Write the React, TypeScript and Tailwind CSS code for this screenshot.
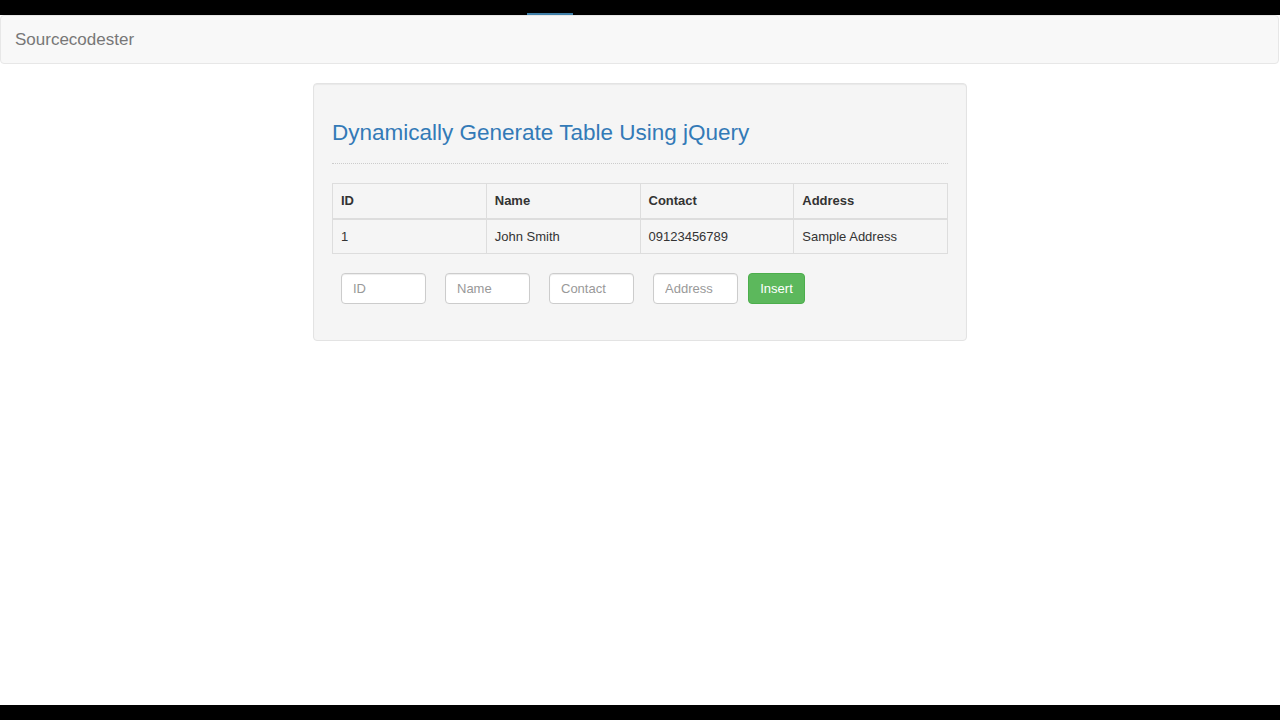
export default function App() {
  const rows = [{ id: "1", name: "John Smith", contact: "09123456789", address: "Sample Address" }];
  const inputs = ["ID", "Name", "Contact", "Address"];

  return (
    <div className="flex min-h-[720px] flex-col bg-white font-['Liberation_Sans',Arial,sans-serif] text-[13px] text-[#333]">
      <div className="relative h-[15px] bg-black">
        <div className="absolute left-[527px] bottom-0 h-[2px] w-[46px] bg-[#3f7fa8]" />
      </div>

      <nav className="mr-[1px] flex h-[49px] items-center rounded-[4px] border border-[#e7e7e7] bg-[#f8f8f8] px-[14px]">
        <span className="text-[17px] text-[#777]">Sourcecodester</span>
      </nav>

      <main className="flex-1">
        <div className="mx-auto mt-[19px] w-[654px] rounded-[4px] border border-[#e3e3e3] bg-[#f5f5f5] px-[18px] pt-[19px] pb-[36px] shadow-[inset_0_1px_1px_rgba(0,0,0,0.05)]">
          <h3 className="mt-[18px] text-[22.5px] leading-[24px] text-[#337ab7]">
            Dynamically Generate Table Using jQuery
          </h3>
          <hr className="mt-[18px] border-0 border-t border-dotted border-[#ccc]" />

          <table className="mt-[19px] w-full table-fixed border-collapse border border-[#ddd]">
            <thead>
              <tr>
                {["ID", "Name", "Contact", "Address"].map((h) => (
                  <th
                    key={h}
                    className="h-[35px] border border-b-2 border-[#ddd] px-[8px] text-left align-middle font-bold"
                  >
                    {h}
                  </th>
                ))}
              </tr>
            </thead>
            <tbody>
              {rows.map((r) => (
                <tr key={r.id}>
                  {[r.id, r.name, r.contact, r.address].map((c, i) => (
                    <td key={i} className="h-[35px] border border-[#ddd] px-[8px] align-middle">
                      {c}
                    </td>
                  ))}
                </tr>
              ))}
            </tbody>
          </table>

          <div className="mt-[19px] flex items-center pl-[9px]">
            {inputs.map((p, i) => (
              <input
                key={p}
                placeholder={p}
                className={
                  "h-[31px] w-[85px] rounded-[4px] border border-[#ccc] bg-white px-[11px] text-[13px] text-[#555] placeholder:text-[#999] shadow-[inset_0_1px_1px_rgba(0,0,0,0.075)] outline-none " +
                  (i === 0 ? "" : "ml-[19px]")
                }
              />
            ))}
            <button className="ml-[10px] h-[31px] w-[57px] rounded-[4px] border border-[#4cae4c] bg-[#5cb85c] text-[13px] text-white">
              Insert
            </button>
          </div>
        </div>
      </main>

      <div className="h-[15px] bg-black" />
    </div>
  );
}
